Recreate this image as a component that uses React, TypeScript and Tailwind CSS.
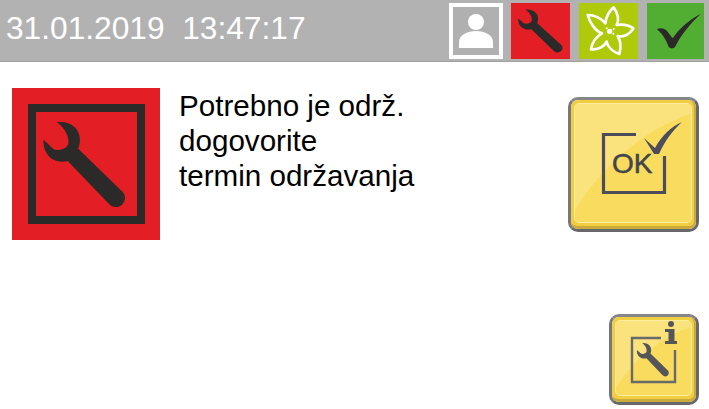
import React from "react";

const WrenchPath = "M170 122 C208 116 242 140 240 178 C240 190 237 196 235 203 L370 335 C386 352 372 381 350 381 C340 381 334 377 327 370 L203 240 C188 245 163 243 148 228 C133 213 128 195 130 175 L160 204 C175 210 198 205 204 190 C211 165 190 135 170 122 Z";

function Wrench({ className, color }: { className: string; color: string }) {
  return (
    <svg viewBox="128 118 252 266" preserveAspectRatio="none" className={className}>
      <path d={WrenchPath} fill={color} />
    </svg>
  );
}

function YellowButton({ className, children }: { className: string; children: React.ReactNode }) {
  return (
    <div className={`relative shrink-0 rounded-[10px] border-[3px] border-[#67686c] border-t-[#85868a] border-l-[#77787c] ${className}`}>
      <div className="h-full rounded-[7px] border-b-[3px] border-r-[2px] border-[#c9aa3a] bg-[#f1cd42] pb-[3px] pl-[3px] pr-[2px] pt-[3px]">
        <div className="relative h-full overflow-hidden rounded-[5px] border border-[#fdeda0] bg-[#f9dc5e]">
          <svg viewBox="0 0 100 100" preserveAspectRatio="none" className="absolute inset-0 h-full w-full">
            <path d="M0 0 H100 V8 C60 22 25 50 0 90 Z" fill="#fae27c" />
          </svg>
        </div>
      </div>
      <div className="absolute inset-[-3px]">{children}</div>
    </div>
  );
}

export default function App() {
  return (
    <div className="flex h-[409px] w-[709px] flex-col overflow-hidden bg-white font-['Liberation_Sans',sans-serif]">
      <header className="flex h-[62px] shrink-0 items-start justify-between border-b border-[#a0a0a0] bg-[#b2b2b2] pr-[5px] pt-[3px]">
        <div className="pl-[6px] pt-[6px] text-[31.7px] leading-[38px] text-white whitespace-pre">31.01.2019  13:47:17</div>
        <div className="flex gap-[9px]">
          <div className="-mr-[1px] flex h-[56px] w-[54px] items-center justify-center border-[4px] border-white bg-[#b0b0b0]">
            <svg viewBox="0 0 34 34" className="h-[34px] w-[34px]">
              <circle cx="17" cy="8" r="8" fill="#fff" />
              <path d="M0 34 V28 C0 21 8 17 17 17 C26 17 34 21 34 28 V34 Z" fill="#fff" />
            </svg>
          </div>
          <div className="flex h-[56px] w-[59px] items-center justify-center bg-[#e31e24]">
            <Wrench className="h-[44px] w-[45px]" color="#2b2a29" />
          </div>
          <div className="flex h-[56px] w-[59px] items-center justify-center bg-[#afca0b]">
            <svg viewBox="12 0 174 186" className="h-[62px] w-[58px] shrink-0">
              <path
                d="M113 22 C125 40 130 60 122 75 C140 72 158 75 172 85 C160 105 140 112 125 108 C135 125 135 145 130 162 C110 155 95 140 92 125 C85 140 65 150 45 148 C48 130 60 110 78 100 C60 95 42 70 35 45 C55 45 75 55 88 70 C90 55 98 35 113 22 Z"
                fill="none"
                stroke="#fff"
                strokeWidth="8"
                strokeLinejoin="round"
              />
              <circle cx="101" cy="94" r="8" fill="#fff" />
              <circle cx="113" cy="87" r="3" fill="#fff" />
              <circle cx="92" cy="85" r="3" fill="#fff" />
              <circle cx="112" cy="101" r="3" fill="#fff" />
            </svg>
          </div>
          <div className="flex h-[56px] w-[57px] items-center justify-center bg-[#52ae32]">
            <svg viewBox="0 0 50 44" preserveAspectRatio="none" className="ml-[6px] h-[36px] w-[46px] shrink-0">
              <path d="M1 20 C5 17 10 19 12 22 L18 31 C25 20 35 9 49 1 C38 12 27 27 21 41 C19 44 16 44 14 42 C11 34 8 26 1 20 Z" fill="#2b2a29" />
            </svg>
          </div>
        </div>
      </header>

      <main className="flex min-h-0 flex-1 items-stretch pb-[4px] pl-[12px] pr-[10px] pt-[26px]">
        <div className="flex h-[152px] w-[148px] shrink-0 items-center justify-center bg-[#e31e24]">
          <div className="flex h-[120px] w-[117px] items-center justify-center border-[8px] border-[#2b2a29]">
            <Wrench className="mr-[3px] mt-[1px] h-[87px] w-[83px] shrink-0" color="#2b2a29" />
          </div>
        </div>
        <div className="ml-[19px] min-w-0 flex-1 text-[29.6px] leading-[35px] text-black">
          <div>Potrebno je održ.</div>
          <div>dogovorite</div>
          <div>termin održavanja</div>
        </div>
        <div className="flex w-[131px] shrink-0 flex-col items-end justify-between pt-[9px]">
          <YellowButton className="h-[135px] w-[131px]">
            <svg viewBox="0 0 131 135" className="h-full w-full">
              <path d="M68 37.5 H35.5 V95.5 H96.5 V59" fill="none" stroke="#4c4c5a" strokeWidth="3.2" />
              <path d="M76 41 L87 51 C94 38 103 30 114 25 C104 34 97 44 91 57 L86 57 Z" fill="#4c4c5a" />
              <text x="44" y="76" fontFamily="Liberation Sans" fontSize="28" fill="#44444c" stroke="#44444c" strokeWidth="0.5">OK</text>
            </svg>
          </YellowButton>
          <YellowButton className="h-[91px] w-[90px]">
            <svg viewBox="0 0 90 91" className="h-full w-full">
              <path d="M52 24 H23 V68 H66 V36" fill="none" stroke="#6a6a6a" strokeWidth="2.4" />
              <path transform="translate(11.2 13.3) scale(0.129)" d={WrenchPath} fill="#56565a" />
              <circle cx="62" cy="10" r="3" fill="#56565a" />
              <path d="M56 15 H65.5 V27 H68 V30 H56 V27 H59.5 V18 H56 Z" fill="#56565a" />
            </svg>
          </YellowButton>
        </div>
      </main>
    </div>
  );
}
